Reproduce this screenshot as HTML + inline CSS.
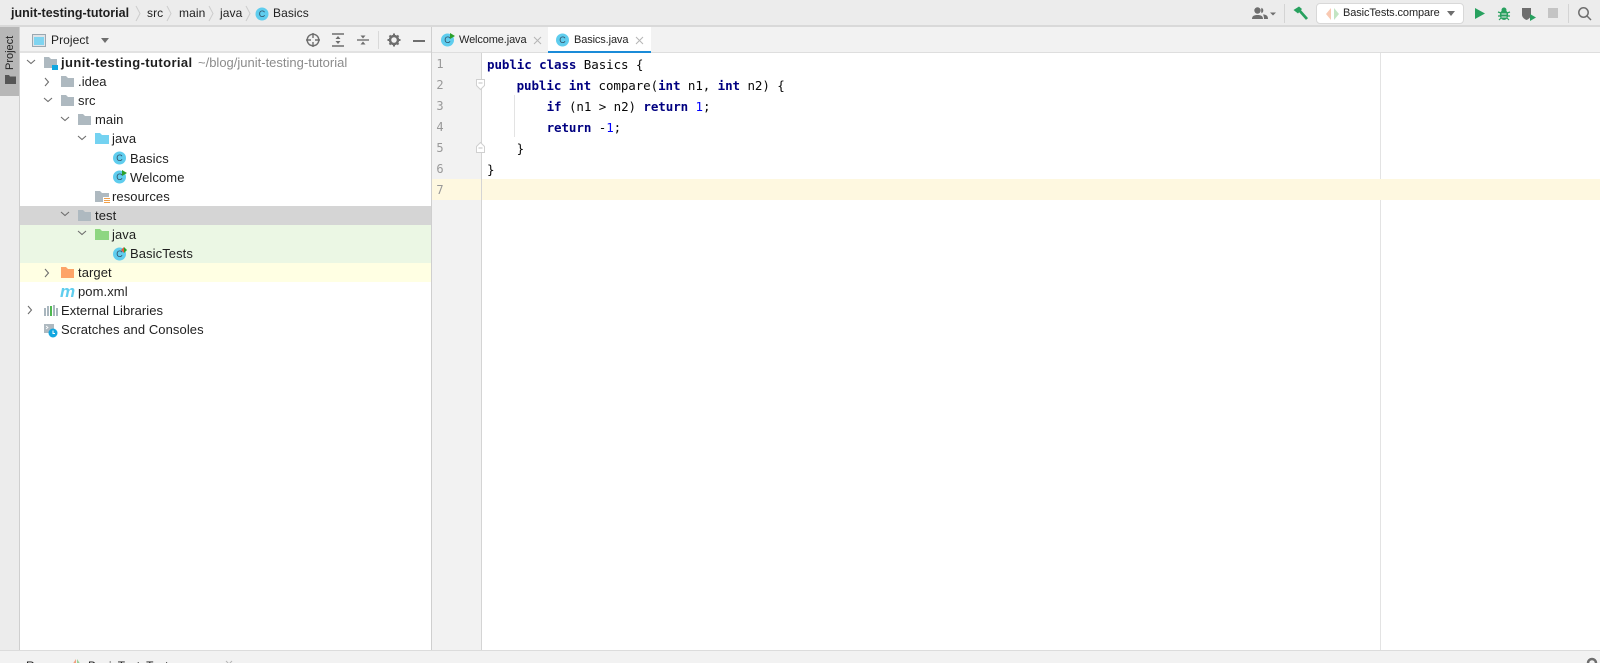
<!DOCTYPE html>
<html><head><meta charset="utf-8"><style>
*{box-sizing:border-box}
html,body{margin:0;padding:0;width:1600px;height:663px;overflow:hidden;background:#fff;font-family:"Liberation Sans",sans-serif;color:#1f1f1f}
.a{position:absolute}
.t{position:absolute;white-space:nowrap;font-size:13px;line-height:19px;height:19px;letter-spacing:.08px}
.r{position:absolute;left:20px;width:412px;height:19px}
.c{position:absolute;font:12.5px/21px "DejaVu Sans Mono",monospace;letter-spacing:-.08px;white-space:pre;color:#080808;height:21px}
.k{color:#000080;font-weight:bold}.n{color:#0000ff}
.ln{position:absolute;width:12px;text-align:center;font:12px/21px "DejaVu Sans Mono",monospace;color:#999}
svg{position:absolute;overflow:visible}
</style></head><body>
<!-- top bar -->
<div class="a" style="left:0;top:0;width:1600px;height:27px;background:#ececec;border-bottom:2px solid #d9d9d9"></div>
<div class="t" style="left:11px;top:4px;font-weight:bold;font-size:12.5px;letter-spacing:0">junit-testing-tutorial</div>
<div class="t" style="left:147px;top:4px;font-size:12px">src</div>
<div class="t" style="left:179px;top:4px;font-size:12px">main</div>
<div class="t" style="left:220px;top:4px;font-size:12px">java</div>
<div class="t" style="left:273px;top:4px;font-size:12px">Basics</div>
<svg width="1600" height="663" style="left:0;top:0" fill="none" stroke="#cdcdcd" stroke-width="1"><path d="M136 6l4 7.500-4 7.500M167 6l4 7.500-4 7.500M209 6l4 7.500-4 7.500M246 6l4 7.500-4 7.500"/></svg>
<svg width="14" height="14" style="left:255px;top:7px"><circle cx="7" cy="7" r="6.500" fill="#5fcdee"/><text x="7" y="10" font-size="9" text-anchor="middle" font-family="Liberation Sans" fill="#33536a">C</text></svg>
<!-- right toolbar -->
<svg width="25" height="16" style="left:1252px;top:7px" fill="#6e6e6e"><circle cx="5.500" cy="3.500" r="3.200"/><path d="M0 12c0-3 2-4 5.500-4s5.500 1 5.500 4z"/><path d="M9.500.8a3 3 0 0 1 0 5.500c-.5-2-.5-3.500 0-5.500zM11 7.500c3 0 5 1 5 4.500h-4c0-2-.3-3-1-4.500z"/><path d="M18 5.500h6l-3 3z"/></svg>
<div class="a" style="left:1284px;top:4px;width:1px;height:19px;background:#d4d4d4"></div>
<svg width="15" height="15" style="left:1293px;top:6px" fill="none" stroke="#28a15f"><path d="M.5 4L6 .5 9 3 5 7.500z" fill="#28a15f" stroke="none"/><path d="M6 4l8 9" stroke-width="2.800"/></svg>
<div class="a" style="left:1316px;top:3px;width:148px;height:21px;background:#fff;border:1px solid #d8d8d8;border-radius:4px"></div>
<svg width="14" height="12" style="left:1326px;top:8px"><path d="M5 0L0 6l5 6z" fill="#f9c9b2"/><path d="M8 0l5 6-5 6z" fill="#c3e5c3"/></svg>
<div class="t" style="left:1343px;top:4px;font-size:11px;letter-spacing:-.1px">BasicTests.compare</div>
<svg width="10" height="6" style="left:1447px;top:11px"><path d="M0 0h8L4 5z" fill="#6e6e6e"/></svg>
<svg width="12" height="12" style="left:1475px;top:8px"><path d="M0 0l10 5.500-10 5.500z" fill="#28a15f"/></svg>
<svg width="14" height="14" style="left:1498px;top:7px" fill="#28a15f"><ellipse cx="6" cy="8" rx="4.200" ry="5"/><circle cx="6" cy="3" r="2.500"/><path d="M0 5l3 1M12 5l-3 1M0 9h12M1 13l2-2M11 13l-2-2" stroke="#28a15f" stroke-width="1.200"/><path d="M3.500 7h5M3.500 10h5" stroke="#ececec"/></svg>
<svg width="16" height="16" style="left:1522px;top:8px"><path d="M0 0h9v7c0 2-2 4-4.500 5C2 11 0 9 0 7z" fill="#6e6e6e"/><path d="M8 6l6 3.500L8 13z" fill="#28a15f"/></svg>
<div class="a" style="left:1548px;top:8px;width:10px;height:10px;background:#c4c4c4"></div>
<div class="a" style="left:1568px;top:4px;width:1px;height:19px;background:#d4d4d4"></div>
<svg width="14" height="14" style="left:1578px;top:7px" fill="none" stroke="#6e6e6e" stroke-width="1.500"><circle cx="5.500" cy="5.500" r="4.700"/><path d="M9 9l4 4"/></svg>
<!-- left strip -->
<div class="a" style="left:0;top:27px;width:20px;height:624px;background:#ececec;border-right:1px solid #cfcfcf"></div>
<div class="a" style="left:0;top:27px;width:19px;height:69px;background:#b7b7b7"></div>
<div class="a" style="left:3px;top:35px;width:14px;height:35px;font-size:11px;line-height:14px;writing-mode:vertical-rl;transform:rotate(180deg);white-space:nowrap;color:#222;text-align:center">Project</div>
<svg width="11" height="9" style="left:5px;top:75px"><path d="M0 0h4l1 1.500h6V9H0z" fill="#555"/></svg>
<!-- project header -->
<div class="a" style="left:20px;top:27px;width:412px;height:26px;background:#f2f2f2;border-bottom:2px solid #e2e2e2"></div>
<svg width="14" height="13" style="left:32px;top:34px"><rect x=".5" y=".5" width="13" height="12" fill="#dfe3e6" stroke="#9aa7b0"/><rect x="2" y="3" width="10" height="8" fill="#7fd4f0"/></svg>
<div class="t" style="left:51px;top:31px;font-size:12px">Project</div>
<svg width="9" height="6" style="left:101px;top:38px"><path d="M0 0h8L4 5z" fill="#6e6e6e"/></svg>
<svg width="14" height="14" style="left:306px;top:33px" fill="none" stroke="#6e6e6e" stroke-width="1.400"><circle cx="7" cy="7" r="5.800"/><path d="M7 0v5M7 9v5M0 7h5M9 7h5"/></svg>
<svg width="14" height="14" style="left:331px;top:33px" fill="none" stroke="#6e6e6e" stroke-width="1.400"><path d="M1 1h12M1 13h12"/><path d="M7 3L4.500 6h5zM7 11L4.500 8h5z" fill="#6e6e6e" stroke="none"/></svg>
<svg width="14" height="14" style="left:356px;top:33px" fill="none" stroke="#6e6e6e" stroke-width="1.400"><path d="M1 7h12"/><path d="M7 5.500L4.500 2.500h5zM7 8.500l-2.500 3h5z" fill="#6e6e6e" stroke="none"/></svg>
<div class="a" style="left:378px;top:31px;width:1px;height:18px;background:#d9d9d9"></div>
<svg width="14" height="14" style="left:387px;top:33px"><circle cx="7" cy="7" r="4" fill="none" stroke="#6e6e6e" stroke-width="2.500"/><path d="M7 .5v3M7 10.500v3M.5 7h3M10.500 7h3M2.500 2.500l2 2M9.500 9.500l2 2M2.500 11.500l2-2M9.500 4.500l2-2" stroke="#6e6e6e" stroke-width="2"/></svg>
<div class="a" style="left:413px;top:40px;width:12px;height:1.500px;background:#6e6e6e"></div>
<!-- tree backgrounds -->
<div class="r" style="top:206px;background:#d5d5d5"></div>
<div class="r" style="top:225px;height:38px;background:#ebf7e4"></div>
<div class="r" style="top:263px;background:#ffffe3"></div>
<!-- chevrons + tree icons -->
<svg width="1600" height="663" style="left:0;top:0">
<g fill="none" stroke="#6e6e6e" stroke-width="1.100"><path d="M27 60l4 3.500 4-3.500M45 78l3.500 4-3.500 4M44 98l4 3.500 4-3.500M61 117l4 3.500 4-3.500M78 136l4 3.500 4-3.500M61 212l4 3.500 4-3.500M78 231l4 3.500 4-3.500M45 269l3.500 4-3.500 4M28 306l3.500 4-3.500 4"/></g>
<path d="M44 57h5l2 2h6v9H44z" fill="#aeb9c0"/><rect x="52" y="65" width="6" height="5" fill="#12a7e0"/>
<path d="M61 76h5l2 2h6v9H61z" fill="#aeb9c0"/>
<path d="M61 95h5l2 2h6v9H61z" fill="#aeb9c0"/>
<path d="M78 114h5l2 2h6v9H78z" fill="#aeb9c0"/>
<path d="M95 133h5l2 2h7v9H95z" fill="#74d2f1"/>
<path d="M95 191h5l2 2h7v9H95z" fill="#aeb9c0"/><path d="M103 197h7v8h-7z" fill="#fff"/><path d="M104 198h6v1h-6zM104 200h6v1h-6zM104 202h6v1h-6z" fill="#f0a04a"/>
<path d="M78 210h5l2 2h6v9H78z" fill="#aeb9c0"/>
<path d="M95 229h5l2 2h7v9H95z" fill="#8ed681"/>
<path d="M61 267h5l2 2h6v9H61z" fill="#fda468"/>
<path d="M44 308h2v8h-2zM47 306h2v10h-2zM53 305h2v11h-2zM56 308h2v8h-2z" fill="#a9b6be"/><path d="M50 306h2v10h-2z" fill="#4fb84f"/>
<path d="M44 324h10v5h-3v4h-7z" fill="#aeb9c0"/><path d="M46 326l2 1.500-2 1.500" stroke="#fff" fill="none" stroke-width=".8"/><circle cx="53" cy="333" r="4.500" fill="#12a7e0"/><path d="M53 330.500v3h2" stroke="#fff" fill="none"/>
</svg>
<!-- class icons -->
<svg width="14" height="14" style="left:113px;top:151px"><circle cx="6.500" cy="7" r="6.500" fill="#5fcdee"/><text x="6.500" y="10" font-size="9" text-anchor="middle" font-family="Liberation Sans" fill="#33536a">C</text></svg>
<svg width="14" height="14" style="left:113px;top:170px"><circle cx="6.500" cy="7" r="6.500" fill="#5fcdee"/><text x="6.500" y="10" font-size="9" text-anchor="middle" font-family="Liberation Sans" fill="#33536a">C</text><path d="M9 0l5 3-5 3z" fill="#2ba02b"/></svg>
<svg width="14" height="14" style="left:113px;top:247px"><circle cx="6.500" cy="7" r="6.500" fill="#5fcdee"/><text x="6.500" y="10" font-size="9" text-anchor="middle" font-family="Liberation Sans" fill="#33536a">C</text><path d="M8 3l3-3v6z" fill="#e05a3a"/><path d="M11 0l3 3-3 3z" fill="#2ba02b"/></svg>
<!-- tree text -->
<div class="t" style="left:61px;top:53px;font-weight:bold;letter-spacing:.4px">junit-testing-tutorial</div>
<div class="t" style="left:198px;top:53px;color:#8c8c8c;letter-spacing:0">~/blog/junit-testing-tutorial</div>
<div class="t" style="left:78px;top:72px">.idea</div>
<div class="t" style="left:78px;top:91px">src</div>
<div class="t" style="left:95px;top:110px">main</div>
<div class="t" style="left:112px;top:129px">java</div>
<div class="t" style="left:130px;top:149px">Basics</div>
<div class="t" style="left:130px;top:168px">Welcome</div>
<div class="t" style="left:112px;top:187px">resources</div>
<div class="t" style="left:95px;top:206px">test</div>
<div class="t" style="left:112px;top:225px">java</div>
<div class="t" style="left:130px;top:244px">BasicTests</div>
<div class="t" style="left:78px;top:263px">target</div>
<div class="t" style="left:78px;top:282px">pom.xml</div>
<div class="t" style="left:61px;top:301px;letter-spacing:.05px">External Libraries</div>
<div class="t" style="left:61px;top:320px">Scratches and Consoles</div>
<svg width="16" height="12" style="left:60px;top:286px"><text x="0" y="11" font-size="17" font-weight="bold" font-style="italic" font-family="Liberation Sans" fill="#5fcdee">m</text></svg>
<!-- panel divider -->
<div class="a" style="left:431px;top:27px;width:1px;height:624px;background:#cfcfcf"></div>
<!-- tabs -->
<div class="a" style="left:432px;top:27px;width:1168px;height:26px;background:#f2f2f2;border-bottom:1px solid #dedede"></div>
<div class="a" style="left:548px;top:27px;width:103px;height:26px;background:#fff;border-bottom:2px solid #1a8bd8"></div>
<svg width="14" height="14" style="left:441px;top:33px"><circle cx="6.500" cy="7" r="6.500" fill="#5fcdee"/><text x="6.500" y="10" font-size="9" text-anchor="middle" font-family="Liberation Sans" fill="#33536a">C</text><path d="M9 0l5 3-5 3z" fill="#2ba02b"/></svg>
<div class="t" style="left:459px;top:31px;font-size:11px;letter-spacing:-.12px">Welcome.java</div>
<svg width="9" height="9" style="left:533px;top:36px" stroke="#b5b5b5" fill="none"><path d="M1 1l7 7M8 1l-7 7"/></svg>
<svg width="14" height="14" style="left:556px;top:33px"><circle cx="6.500" cy="7" r="6.500" fill="#5fcdee"/><text x="6.500" y="10" font-size="9" text-anchor="middle" font-family="Liberation Sans" fill="#33536a">C</text></svg>
<div class="t" style="left:574px;top:31px;font-size:11px;letter-spacing:-.12px">Basics.java</div>
<svg width="9" height="9" style="left:635px;top:36px" stroke="#b5b5b5" fill="none"><path d="M1 1l7 7M8 1l-7 7"/></svg>
<!-- gutter -->
<div class="a" style="left:432px;top:53px;width:49px;height:598px;background:#f2f2f2"></div>
<div class="a" style="left:481px;top:53px;width:1px;height:598px;background:#d4d4d4"></div>
<div class="a" style="left:1380px;top:53px;width:1px;height:598px;background:#e3e3e3"></div>
<div class="a" style="left:432px;top:179px;width:49px;height:21px;background:#fef8e0"></div>
<div class="a" style="left:482px;top:179px;width:1118px;height:21px;background:#fef8e0"></div>
<div class="ln" style="top:54px;left:434px">1</div><div class="ln" style="top:75px;left:434px">2</div><div class="ln" style="top:96px;left:434px">3</div><div class="ln" style="top:117px;left:434px">4</div><div class="ln" style="top:138px;left:434px">5</div><div class="ln" style="top:159px;left:434px">6</div><div class="ln" style="top:180px;left:434px">7</div>
<svg width="9" height="11" style="left:476px;top:79px"><path d="M.5.500h8v6l-4 4-4-4z" fill="#fff" stroke="#d0d0d0"/><path d="M2.500 4h4" stroke="#c0c0c0"/></svg>
<svg width="9" height="11" style="left:476px;top:142px"><path d="M.5 10.500h8v-6l-4-4-4 4z" fill="#fff" stroke="#d0d0d0"/><path d="M2.500 6h4" stroke="#c0c0c0"/></svg>
<div class="a" style="left:514px;top:95px;width:1px;height:42px;background:#e3e3e3"></div>
<!-- code -->
<div class="c" style="left:487px;top:54px"><span class="k">public class</span> Basics {</div>
<div class="c" style="left:516.6px;top:75px"><span class="k">public int</span> compare(<span class="k">int</span> n1, <span class="k">int</span> n2) {</div>
<div class="c" style="left:546.6px;top:96px"><span class="k">if</span> (n1 &gt; n2) <span class="k">return</span> <span class="n">1</span>;</div>
<div class="c" style="left:546.6px;top:117px"><span class="k">return</span> -<span class="n">1</span>;</div>
<div class="c" style="left:516.6px;top:138px">}</div>
<div class="c" style="left:487px;top:159px">}</div>
<!-- bottom -->
<div class="a" style="left:0;top:650px;width:1600px;height:13px;background:#f2f2f2;border-top:1px solid #dcdcdc;overflow:hidden">
<div class="t" style="left:26px;top:6px;font-size:12px">Run:</div>
<svg width="14" height="12" style="left:72px;top:8px"><path d="M4 0L0 6l4 6z" fill="#f0a080"/><path d="M5 0l4 6-4 6z" fill="#9ad29a"/></svg>
<div class="t" style="left:88px;top:6px;font-size:12px">BasicTestsTest.compare</div>
<svg width="9" height="9" style="left:225px;top:9px" stroke="#b5b5b5" fill="none"><path d="M1 1l6 6M7 1L1 7"/></svg>
<svg width="12" height="12" style="left:1586px;top:6px"><circle cx="6" cy="6" r="4" fill="none" stroke="#6e6e6e" stroke-width="2.500"/></svg>
</div>
</body></html>
